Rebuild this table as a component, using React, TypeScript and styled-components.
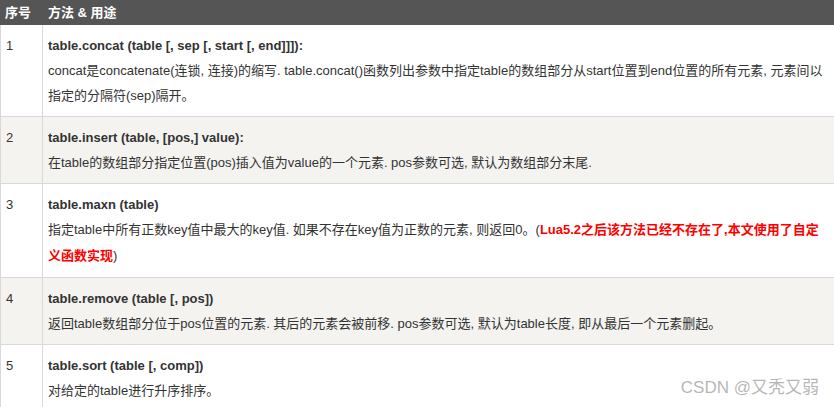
import React from "react";
import styled, { createGlobalStyle } from "styled-components";

const GlobalStyle = createGlobalStyle`
  html, body {
    margin: 0;
    padding: 0;
    background: #ffffff;
    overflow: hidden;
  }
  body {
    font-family: "Liberation Sans", Arial, "Noto Sans CJK SC", sans-serif;
    color: #333333;
  }
`;

const Page = styled.div`
  position: relative;
  width: 834px;
  height: 407px;
  overflow: hidden;
`;

const Table = styled.table`
  width: 840px;
  border-collapse: separate;
  border-spacing: 0;
  table-layout: fixed;
  font-size: 13px;
  line-height: 25px;
`;

const HeadCell = styled.th<{ $narrow?: boolean }>`
  box-sizing: border-box;
  width: ${(p) => (p.$narrow ? "43px" : "auto")};
  height: 25px;
  padding: 0 5px;
  background: #555555;
  color: #ffffff;
  font-weight: bold;
  text-align: left;
  font-size: 13px;
  line-height: 25px;
  white-space: nowrap;
`;

const Row = styled.tr<{ $alt: boolean }>`
  background: ${(p) => (p.$alt ? "#f4f3f0" : "#ffffff")};
`;

const NumCell = styled.td`
  box-sizing: border-box;
  width: 43px;
  padding: 8px 5px 8px 5px;
  vertical-align: top;
  border-left: 1px solid #d9d9d9;
  border-right: 1px solid #d9d9d9;
  border-bottom: 1px solid #d9d9d9;
  color: #333333;
`;

const BodyCell = styled.td`
  box-sizing: border-box;
  padding: 8px 13px 8px 5px;
  vertical-align: top;
  border-right: 1px solid #d9d9d9;
  border-bottom: 1px solid #d9d9d9;
  color: #333333;
`;

const Title = styled.div`
  font-weight: bold;
  color: #333333;
  line-height: 25px;
`;

const Desc = styled.div`
  line-height: 25px;
  color: #333333;
`;

const Red = styled.span`
  color: #ff0000;
  font-weight: bold;
  line-height: 26px;
`;

const Watermark = styled.div`
  position: absolute;
  right: 15px;
  bottom: 9px;
  font-family: "Liberation Sans", Arial, "Noto Sans CJK SC", sans-serif;
  font-size: 17px;
  line-height: 20px;
  color: rgba(150, 150, 150, 0.7);
  text-shadow: 0 0 1px rgba(255, 255, 255, 0.9);
  white-space: nowrap;
`;

type Item = { n: number; title: string; desc: React.ReactNode };

const items: Item[] = [
  {
    n: 1,
    title: "table.concat (table [, sep [, start [, end]]]):",
    desc: (
      <>
        concat是concatenate(连锁, 连接)的缩写. table.concat()函数列出参数中指定table的数组部分从start位置到end位置的所有元素, 元素间以指定的分隔符(sep)隔开。
      </>
    ),
  },
  {
    n: 2,
    title: "table.insert (table, [pos,] value):",
    desc: <>在table的数组部分指定位置(pos)插入值为value的一个元素. pos参数可选, 默认为数组部分末尾.</>,
  },
  {
    n: 3,
    title: "table.maxn (table)",
    desc: (
      <>
        指定table中所有正数key值中最大的key值. 如果不存在key值为正数的元素, 则返回0。(
        <Red>Lua5.2之后该方法已经不存在了,本文使用了自定义函数实现</Red>)
      </>
    ),
  },
  {
    n: 4,
    title: "table.remove (table [, pos])",
    desc: <>返回table数组部分位于pos位置的元素. 其后的元素会被前移. pos参数可选, 默认为table长度, 即从最后一个元素删起。</>,
  },
  {
    n: 5,
    title: "table.sort (table [, comp])",
    desc: <>对给定的table进行升序排序。</>,
  },
];

export default function App() {
  return (
    <Page>
      <GlobalStyle />
      <Table>
        <thead>
          <tr>
            <HeadCell $narrow>序号</HeadCell>
            <HeadCell>方法 &amp; 用途</HeadCell>
          </tr>
        </thead>
        <tbody>
          {items.map((it, i) => (
            <Row key={it.n} $alt={i % 2 === 1}>
              <NumCell>{it.n}</NumCell>
              <BodyCell>
                <Title>{it.title}</Title>
                <Desc>{it.desc}</Desc>
              </BodyCell>
            </Row>
          ))}
        </tbody>
      </Table>
      <Watermark>CSDN @又秃又弱</Watermark>
    </Page>
  );
}
